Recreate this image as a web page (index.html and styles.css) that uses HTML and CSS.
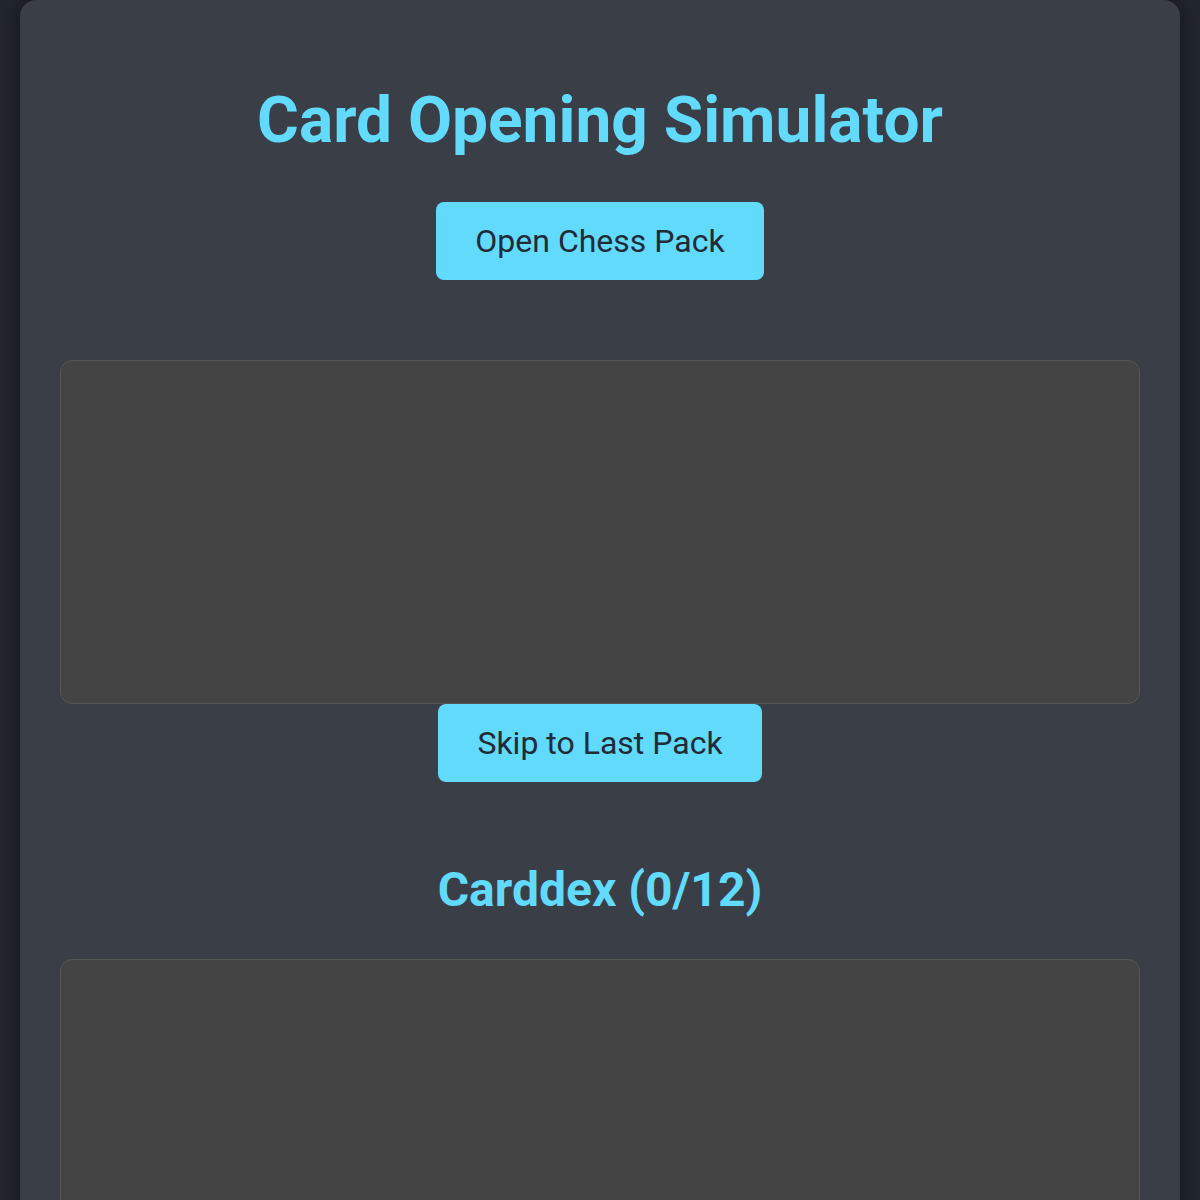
FILE: index.html
```html
<!DOCTYPE html>
<html>

<head>
    <meta charset="utf-8">
    <meta name="viewport" content="width=device-width, initial-scale=1.0">
    <title>Card Opening Simulator</title>
    <link rel="stylesheet" href="styles.css">
</head>

<body>
    <div class="app">
        <h1>Card Opening Simulator</h1>
        <button class="btn">Open Chess Pack</button>
        <div class="pack"></div>
        <button class="btn skip">Skip to Last Pack</button>
        <h2>Carddex (0/12)</h2>
        <div class="carddex"></div>
    </div>
</body>

</html>
```

FILE: styles.css
```css
body {
    font-family: Roboto, "Helvetica Neue", Arial, sans-serif;
    background-color: #22262d;
    color: #61dafb;
    margin: 0;
    padding: 0;
}

div.app {
    margin: 0 20px;
    padding: 40px 40px 40px;
    background: #3a3f47;
    border-radius: 16px;
    box-shadow: 0 0 20px rgba(0, 0, 0, 0.45);
    text-align: center;
    min-height: 1200px;
    box-sizing: border-box;
}

h1 {
    font-size: 64px;
    line-height: 75px;
    margin: 43px 0 44px;
    font-weight: 700;
}

h2 {
    font-size: 48px;
    line-height: 56px;
    margin: 80px 0 41px;
    font-weight: 700;
}

.btn {
    font-family: Roboto, "Helvetica Neue", Arial, sans-serif;
    font-size: 32px;
    line-height: 38px;
    padding: 20px 39px;
    border: none;
    border-radius: 8px;
    background: #61dafb;
    color: #222b35;
    cursor: pointer;
}

.pack,
.carddex {
    background: #444444;
    border: 1px solid #575757;
    border-radius: 12px;
    text-align: left;
}

.pack {
    margin-top: 80px;
    height: 342px;
}

.carddex {
    height: 400px;
}
```
